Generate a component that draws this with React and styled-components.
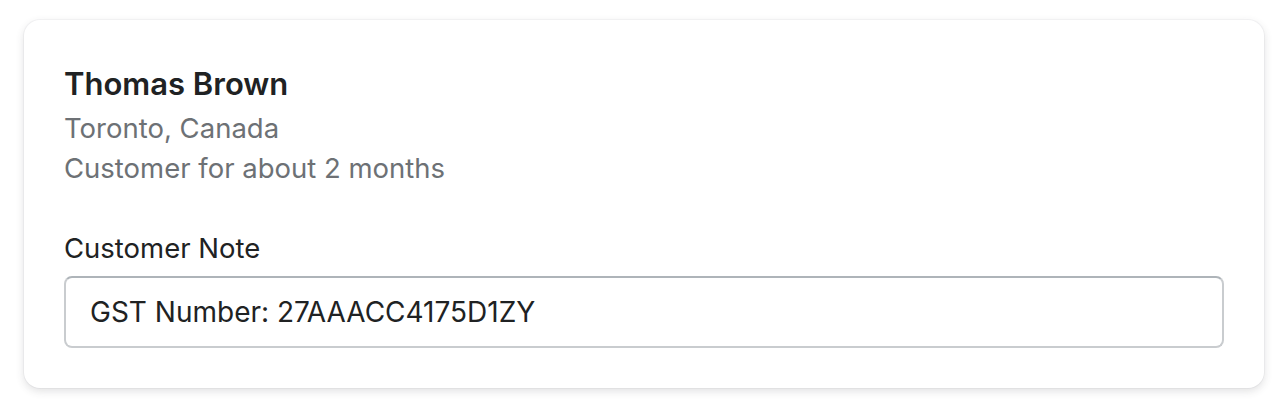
import React from 'react'
import styled, { createGlobalStyle } from 'styled-components'

const GlobalStyle = createGlobalStyle`
  * { box-sizing: border-box; }
  body {
    margin: 0;
    background: #ffffff;
    font-family: Inter, "Noto Sans", "Liberation Sans", sans-serif;
    -webkit-font-smoothing: antialiased;
  }
`

const Page = styled.div`
  padding: 20px 16px 20px 24px;
`

const Card = styled.section`
  background: #ffffff;
  border-radius: 16px;
  padding: 40px;
  box-shadow: 0 0 0 1px rgba(63, 63, 68, 0.04), 0 3px 8px 0 rgba(63, 63, 68, 0.16);
`

const Name = styled.h2`
  margin: 0;
  font-size: 31px;
  line-height: 48px;
  font-weight: 600;
  color: #202223;
  letter-spacing: 0;
`

const Meta = styled.p`
  margin: 0;
  font-size: 27.5px;
  line-height: 40px;
  color: #6d7175;
`

const Field = styled.div`
  margin-top: 40px;
  display: flex;
  flex-direction: column;
  gap: 8px;
`

const Label = styled.label`
  font-size: 27.5px;
  line-height: 40px;
  color: #202223;
`

const Input = styled.input`
  height: 72px;
  width: 100%;
  padding: 0 24px;
  border: 2px solid #c9cccf;
  border-top-color: #aeb4b9;
  border-radius: 8px;
  background: #ffffff;
  font-family: inherit;
  font-size: 28px;
  color: #202223;
  outline: none;
`

export default function App() {
  return (
    <Page>
      <GlobalStyle />
      <Card>
        <Name>Thomas Brown</Name>
        <Meta>Toronto, Canada</Meta>
        <Meta>Customer for about 2 months</Meta>
        <Field>
          <Label htmlFor="note">Customer Note</Label>
          <Input id="note" defaultValue="GST Number: 27AAACC4175D1ZY" readOnly />
        </Field>
      </Card>
    </Page>
  )
}
